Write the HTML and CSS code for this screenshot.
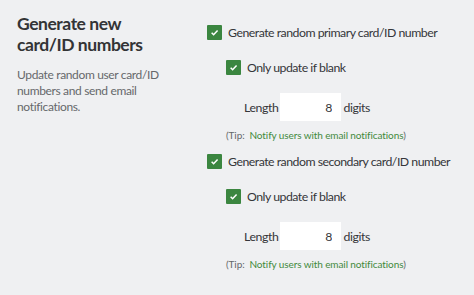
FILE: index.html
```html
<!DOCTYPE html>
<html lang="en">
<head>
    <meta charset="UTF-8">
    <meta name="viewport" content="width=device-width, initial-scale=1.0">
    <title>Generate new card/ID numbers</title>
    <link rel="stylesheet" href="styles.css">
</head>
<body>
    <div class="panel">
        <div class="intro">
            <h2 class="title">Generate new card/ID numbers</h2>
            <p class="desc">Update random user card/ID numbers and send email notifications.</p>
        </div>

        <div class="options">
            <div class="group">
                <label class="check">
                    <span class="box"><svg viewBox="0 0 10 10"><path d="M2.4 5.2 L4.2 7 L7.8 3.2"/></svg></span>
                    Generate random primary card/ID number
                </label>
                <div class="sub">
                    <label class="check">
                        <span class="box"><svg viewBox="0 0 10 10"><path d="M2.4 5.2 L4.2 7 L7.8 3.2"/></svg></span>
                        Only update if blank
                    </label>
                    <div class="length-row">
                        <span>Length</span>
                        <input class="length" type="text" value="8">
                        <span>digits</span>
                    </div>
                    <p class="tip">(Tip:&nbsp; <span class="tip-link">Notify users with email notifications</span>)</p>
                </div>
            </div>

            <div class="group">
                <label class="check">
                    <span class="box"><svg viewBox="0 0 10 10"><path d="M2.4 5.2 L4.2 7 L7.8 3.2"/></svg></span>
                    Generate random secondary card/ID number
                </label>
                <div class="sub">
                    <label class="check">
                        <span class="box"><svg viewBox="0 0 10 10"><path d="M2.4 5.2 L4.2 7 L7.8 3.2"/></svg></span>
                        Only update if blank
                    </label>
                    <div class="length-row">
                        <span>Length</span>
                        <input class="length" type="text" value="8">
                        <span>digits</span>
                    </div>
                    <p class="tip">(Tip:&nbsp; <span class="tip-link">Notify users with email notifications</span>)</p>
                </div>
            </div>
        </div>
    </div>
</body>
</html>
```

FILE: styles.css
```css
:root {
    --bg: #eff0f2;
    --text: #35363a;
    --muted: #66686b;
    --green: #3b8640;
    --link: #3f8a3c;
}

* {
    margin: 0;
    padding: 0;
    box-sizing: border-box;
}

body {
    background: var(--bg);
    font-family: 'Lato', 'Open Sans', sans-serif;
    color: var(--text);
    width: 474px;
    height: 295px;
    overflow: hidden;
}

.panel {
    display: flex;
    padding-left: 17px;
}

/* Colonne gauche */
.intro {
    width: 190px;
    flex-shrink: 0;
    padding-top: 13px;
}

.title {
    font-size: 17.5px;
    font-weight: 700;
    line-height: 21px;
    letter-spacing: -0.45px;
    width: 150px;
    color: #333436;
}

.desc {
    margin-top: 12px;
    font-size: 12px;
    line-height: 16px;
    letter-spacing: -0.35px;
    color: var(--muted);
    width: 150px;
}

/* Options */
.options {
    display: flex;
    flex-direction: column;
    gap: 11px;
    padding-top: 24px;
    white-space: nowrap;
}

.check {
    display: flex;
    align-items: center;
    gap: 6px;
    font-size: 12.3px;
    line-height: 17px;
    height: 17px;
    letter-spacing: -0.5px;
}

.box {
    width: 15px;
    height: 15px;
    flex-shrink: 0;
    background: var(--green);
    border-radius: 1px;
    display: flex;
    align-items: center;
    justify-content: center;
}

.box svg {
    width: 11px;
    height: 11px;
    fill: none;
    stroke: #fff;
    stroke-width: 1.4;
}

.sub {
    padding-left: 19px;
    padding-top: 18px;
    display: flex;
    flex-direction: column;
}

.length-row {
    display: flex;
    align-items: center;
    gap: 2px;
    padding-left: 18px;
    margin-top: 17px;
    font-size: 12.3px;
    letter-spacing: -0.4px;
}

.length {
    width: 61px;
    height: 28px;
    border: none;
    background: #fff;
    text-align: right;
    padding-right: 9px;
    font-family: inherit;
    font-size: 12.3px;
    color: var(--text);
    outline: none;
}

.tip {
    margin-top: 7px;
    font-size: 10px;
    line-height: 14px;
    letter-spacing: -0.1px;
    color: var(--muted);
}

.tip-link {
    color: var(--link);
}
```
